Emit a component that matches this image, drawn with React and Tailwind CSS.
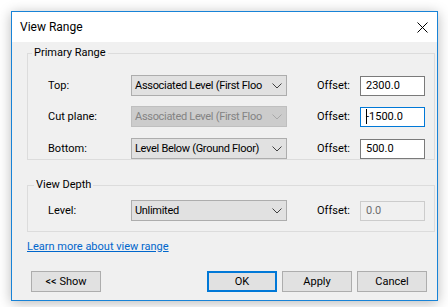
import React from "react";

const font = { fontFamily: 'Roboto, "Noto Sans", sans-serif' };

const Chevron = ({ disabled }) => (
  <svg width="10" height="6" viewBox="0 0 10 6" className="shrink-0">
    <polyline
      points="0.5,0.5 5,5 9.5,0.5"
      fill="none"
      stroke={disabled ? "#a8a8a8" : "#404040"}
      strokeWidth="1"
    />
  </svg>
);

// Windows-style combo box
const Combo = ({ value, disabled }) => (
  <div
    className={
      "w-[156px] h-[21px] flex items-center justify-between pl-[3px] pr-[4px] border " +
      (disabled
        ? "bg-[#cccccc] border-[#bfbfbf] text-[#838383]"
        : "bg-[#e1e1e1] border-[#adadad] text-black")
    }
  >
    <span className="whitespace-nowrap tracking-[-0.3px]">{value}</span>
    <Chevron disabled={disabled} />
  </div>
);

const TextBox = ({ value, focused, disabled }) => (
  <div
    className={
      "w-[65px] h-[20px] flex items-center pl-[5px] border " +
      (focused
        ? "border-[#0078d7] bg-white text-black"
        : disabled
        ? "border-[#cccccc] bg-[#f0f0f0] text-[#6d6d6d]"
        : "border-[#7a7a7a] bg-white text-black")
    }
  >
    {focused && <span className="w-px h-[15px] bg-black -mr-px" />}
    <span>{value}</span>
  </div>
);

const Row = ({ label, combo, comboDisabled, offset, focused, offsetDisabled }) => (
  <div className="h-[21px] flex items-center">
    <span className="w-[83px] ml-[20px]">{label}</span>
    <Combo value={combo} disabled={comboDisabled} />
    <span className="w-[43px] ml-[30px]">Offset:</span>
    <TextBox value={offset} focused={focused} disabled={offsetDisabled} />
  </div>
);

const Button = ({ children, primary }) => (
  <button
    className={
      "w-[70px] h-[21px] flex items-center justify-center bg-[#e1e1e1] text-black " +
      (primary ? "border-2 border-[#0078d7]" : "border border-[#adadad]")
    }
  >
    {children}
  </button>
);

export default function App() {
  return (
    <div className="w-[448px] h-[307px] bg-white pt-[11px] pl-[11px] text-[11px] leading-[16px]" style={font}>
      <div className="w-[427px] h-[290px] border border-[#1883d7] bg-[#f0f0f0] shadow-[0_2px_12px_rgba(0,0,0,0.28)] flex flex-col">
        {/* title bar */}
        <div className="h-[30px] bg-white flex items-center justify-between pl-[8px] pr-[9px] shrink-0">
          <span className="text-[12px]">View Range</span>
          <svg width="11" height="11" viewBox="0 0 11 11">
            <path d="M0.5 0.5 L10.5 10.5 M10.5 0.5 L0.5 10.5" stroke="#000" strokeWidth="1" />
          </svg>
        </div>

        <div className="ml-[15px] w-[408px] flex flex-col">
          <fieldset className="mt-[3px] border border-[#dcdcdc]">
            <legend className="ml-[4px] px-[2px]">Primary Range</legend>
            <div className="pt-[14px] flex flex-col">
              <Row label="Top:" combo="Associated Level (First Floo" offset="2300.0" />
              <div className="mt-[10px]">
                <Row label="Cut plane:" combo="Associated Level (First Floo" comboDisabled offset="-1500.0" focused />
              </div>
              <div className="mt-[11px]">
                <Row label="Bottom:" combo="Level Below (Ground Floor)" offset="500.0" />
              </div>
            </div>
          </fieldset>

          <fieldset className="mt-[17px] border border-[#dcdcdc]">
            <legend className="ml-[6px] px-[2px]">View Depth</legend>
            <div className="pt-[7px] pb-[10px]">
              <Row label="Level:" combo="Unlimited" offset="0.0" offsetDisabled />
            </div>
          </fieldset>

          <a className="mt-[7px] self-start text-[#0066cc] underline">Learn more about view range</a>

          <div className="mt-[16px] flex items-center">
            <div className="ml-[4px]">
              <Button>&lt;&lt; Show</Button>
            </div>
            <div className="ml-auto flex gap-[5px] mr-[8px]">
              <Button primary>OK</Button>
              <Button>Apply</Button>
              <Button>Cancel</Button>
            </div>
          </div>
        </div>
      </div>
    </div>
  );
}
